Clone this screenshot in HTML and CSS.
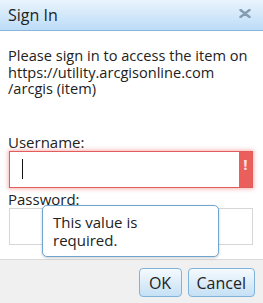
FILE: index.html
```html
<!DOCTYPE html>
<html>
<head>
<meta charset="utf-8">
<link rel="stylesheet" href="styles.css">
</head>
<body>
<div class="dialog">
  <div class="titlebar">
    <span class="title">Sign In</span>
    <svg class="close" width="12" height="9" viewBox="0 0 12 9"><path d="M1.5 1 L10.5 8 M10.5 1 L1.5 8" stroke="#839db0" stroke-width="2.4" stroke-linecap="round"/></svg>
  </div>
  <div class="content">
    <p class="info">Please sign in to access the item on https://utility.arcgisonline.com /arcgis (item)</p>
    <div class="label">Username:</div>
    <div class="field error">
      <span class="caret"></span>
      <span class="err-icon">!</span>
    </div>
    <div class="label label-pw">Password:</div>
    <div class="field"></div>
    <div class="tooltip">This value is required.</div>
  </div>
  <div class="footer">
    <button class="btn btn-ok">OK</button>
    <button class="btn">Cancel</button>
  </div>
</div>
</body>
</html>
```
FILE: styles.css
```css
html, body {
  margin: 0;
  padding: 0;
  background: #ffffff;
}
body {
  font-family: "Open Sans", "Noto Sans", sans-serif;
  color: #222;
  width: 263px;
  height: 303px;
  overflow: hidden;
}
.dialog {
  display: flex;
  flex-direction: column;
  height: 303px;
}
.titlebar {
  height: 30px;
  border-bottom: 1px solid #8cb5d8;
  background: linear-gradient(#eaf4fd, #bcdcf8);
  display: flex;
  align-items: center;
  justify-content: space-between;
  padding: 0 12px 0 8px;
  flex-shrink: 0;
}
.title {
  font-size: 16px;
  color: #222;
}
.close {
  display: block;
  margin-top: -3px;
}
.content {
  position: relative;
  flex: 1;
  padding: 16px 10px 0 9px;
}
.info {
  margin: 0 0 37px -1px;
  font-size: 14.6px;
  line-height: 16.7px;
}
.label {
  font-size: 15px;
  line-height: 17px;
  margin-left: -1px;
}
.label-pw {
  margin-top: 3px;
}
.field {
  position: relative;
  height: 37px;
  box-sizing: border-box;
  border: 1px solid #d6d6d6;
  background: #fff;
}
.field.error {
  border-color: #e45b5b;
  box-shadow: 0 0 4px 1px rgba(235, 90, 90, 0.45);
}
.caret {
  position: absolute;
  left: 12px;
  top: 7px;
  width: 1px;
  height: 20px;
  background: #111;
}
.err-icon {
  position: absolute;
  right: 0;
  top: 0;
  bottom: 0;
  width: 13px;
  background: #ea5f5c;
  color: #fde3e3;
  font-weight: bold;
  font-size: 15px;
  line-height: 24px;
  text-align: center;
}
.tooltip {
  position: absolute;
  left: 42px;
  top: 174px;
  width: 177px;
  height: 52px;
  box-sizing: border-box;
  border: 1px solid #6fa6cf;
  border-radius: 5px;
  background: #fff;
  box-shadow: 0 1px 3px rgba(0, 0, 0, 0.2);
  padding: 7px 50px 0 10px;
  font-size: 15px;
  line-height: 18px;
}
.footer {
  height: 44px;
  border-top: 1px solid #d9d9d9;
  background: #f0f0f0;
  display: flex;
  justify-content: flex-end;
  align-items: flex-start;
  gap: 6px;
  padding: 8px 8px 0 0;
  box-sizing: border-box;
  flex-shrink: 0;
}
.btn {
  height: 29px;
  padding: 0 8px;
  border: 1px solid #7fb3da;
  border-radius: 4px;
  background: linear-gradient(#f5fafe, #c5e0f5);
  font-family: "Open Sans", "Noto Sans", sans-serif;
  font-size: 16px;
  color: #222;
}
.btn-ok {
  width: 43px;
  padding: 0;
}
```
